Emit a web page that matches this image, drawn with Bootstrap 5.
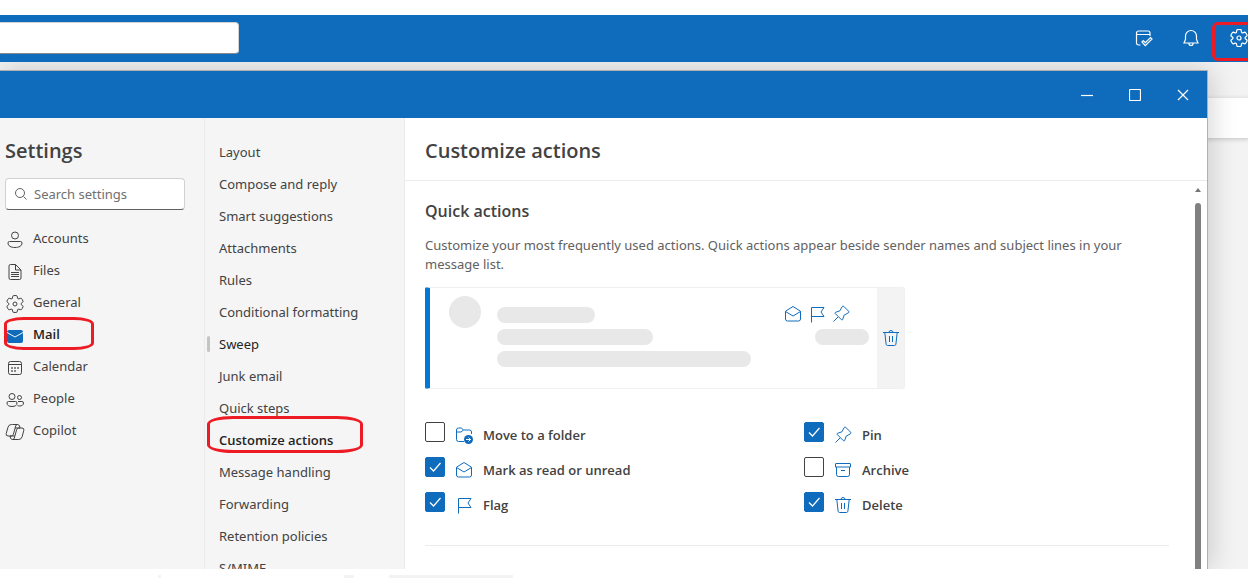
<!DOCTYPE html>
<html lang="en">
<head>
<meta charset="utf-8">
<meta name="viewport" content="width=device-width, initial-scale=1">
<title>Settings - Customize actions</title>
<link href="https://cdn.jsdelivr.net/npm/bootstrap@5.3.0/dist/css/bootstrap.min.css" rel="stylesheet">
<style>
  :root { --brand: #0f6cbd; --ink: #424242; --mark-red: #ed1c24; }
  body { font-family: "Noto Sans", "Open Sans", sans-serif; font-size: 13px; line-height: 20px; color: var(--ink); background: #fff; }
  svg { display: block; flex: none; fill: none; stroke: currentColor; }
  a { color: inherit; text-decoration: none; }
  h1, h2, p { margin: 0; }

  .app-bar { height: 47px; margin-top: 15px; padding-bottom: 2px; background: var(--brand); color: #fff; flex: none; }
  .app-search { width: 240px; height: 32px; margin-left: -1px; border: 1px solid #d1d1d1; border-bottom-color: #8a8a8a; border-left: 0; border-radius: 0 4px 4px 0; background: #fff; }
  .bar-btn { width: 48px; height: 47px; border: 0; padding: 0; background: none; color: #fff; display: flex; align-items: center; justify-content: center; position: relative; stroke-width: 1.2; }
  .app-tools { margin-right: -15px; }

  .stage { display: grid; min-height: 0; grid-template: minmax(0, 1fr) / minmax(0, 1fr); }
  .backdrop, .dialog-window { grid-area: 1 / 1; }
  .backdrop { background: #f3f3f3; }
  .backdrop-band { margin-top: 35px; height: 42px; background: #fff; border-top: 1px solid #e6e6e6; border-bottom: 1px solid #d6d6d6; box-shadow: 0 1px 4px #00000024; }
  .dialog-window { margin: 8px 40px 0 0; border: solid #b0b0b0; border-width: 1px 1px 0 0; box-shadow: 2px 0 26px #0000002e; background: #fff; min-height: 0; position: relative; }
  .title-bar { height: 47px; background: var(--brand); flex: none; }
  .nav-pane { width: 205px; flex: none; background: #f5f5f5; border-right: 1px solid #ebebeb; padding: 18px 19px 0 5px; }
  .sub-pane { width: 200px; flex: none; background: #f5f5f5; border-right: 1px solid #ebebeb; padding: 18px 2px 0; overflow: hidden; }
  .page-title, .section-title, .current, .choice label { font-family: "Open Sans", "Noto Sans", sans-serif; font-weight: 600; }
  .page-title { font-size: 20px; line-height: 30px; }
  .search-box { height: 32px; margin: 12px 0; padding: 0 9px; gap: 7px; border: 1px solid #d1d1d1; border-bottom-color: #616161; border-radius: 4px; background: #fff; color: #616161; }
  .search-box input { border: 0; outline: 0; padding: 0; min-width: 0; color: inherit; background: none; }
  .search-box input::placeholder { color: #707070; opacity: 1; }
  .nav-row { height: 32px; display: flex; align-items: center; gap: 8px; position: relative; }
  .nav-row svg { margin-top: 3px; }
  .sub-row { height: 32px; display: flex; align-items: center; padding-left: 12px; position: relative; }
  .current { color: #242424; }
  .hovered { color: #242424; }
  .hovered::before { content: ""; width: 3px; height: 16px; margin: 0 9px 0 -12px; border-radius: 2px; background: #c4c4c4; }
  .ring { position: absolute; border: 3px solid var(--mark-red); border-radius: 20px / 7px; pointer-events: none; }
  .ring-mail { inset: -1px auto auto -1px; width: 90px; height: 33px; }
  .ring-sub { inset: -8px auto auto 0; width: 156px; height: 37px; border-radius: 26px / 8px; }
  .ring-gear { inset: 8px -9px 0 -3px; border-radius: 6px; }

  .main-head { height: 63px; padding: 18px 20px 0; border-bottom: 1px solid #ebebeb; flex: none; }
  .main-body { padding: 19px 26px 0 20px; min-width: 0; }
  .section-title { font-size: 16px; line-height: 22px; }
  .intro-text { line-height: 19px; margin-top: 14px; color: #616161; }
  .preview { width: 480px; max-width: 100%; height: 102px; margin-top: 13px; border: 1px solid #f0f0f0; border-left: 5px solid #0078d4; border-radius: 2px; color: var(--brand); }
  .avatar { width: 32px; height: 32px; border-radius: 50%; background: #e8e8e8; margin: 8px 16px 0 19px; flex: none; }
  .pill { height: 16px; border-radius: 8px; background: #e8e8e8; }
  .pill-a { width: 98px; } .pill-b { width: 156px; } .pill-c { width: 254px; } .pill-d { width: 54px; }
  .pills { margin-top: 19px; display: grid; gap: 6px; align-content: start; }
  .preview-end { margin: 16px 8px 0 auto; display: grid; gap: 6px; align-content: start; justify-items: end; }
  .quick-icons { gap: 4px; height: 19px; margin-right: 18px; align-items: center; display: flex; }
  .preview-del { width: 27px; background: #f3f3f3; display: flex; align-items: center; justify-content: center; flex: none; }
  .choices { display: grid; grid-template: repeat(3, 20px) / 1fr 1fr; grid-auto-flow: column; gap: 15px 14px; margin-top: 33px; padding-bottom: 33px; border-bottom: 1px solid #ebebeb; }
  .choice { display: flex; align-items: center; }
  .choice input { appearance: none; width: 20px; height: 20px; margin: 0; border: 1px solid #424242; border-radius: 2px; background: #fff center / 20px no-repeat; flex: none; }
  .choice input:checked { border-color: var(--brand); background-color: var(--brand); background-image: url("data:image/svg+xml,%3Csvg xmlns='http://www.w3.org/2000/svg' viewBox='0 0 20 20'%3E%3Cpath d='M5 10.500l3.500 3.500 7-8' fill='none' stroke='white' stroke-width='1.200'/%3E%3C/svg%3E"); }
  .choice label { display: flex; align-items: center; gap: 9px; margin: 6px 0 0 9px; }
  .choice svg { color: var(--brand); }
  .scroll-track { width: 12px; flex: none; padding: 7px 6px 0 0; }
  .scroll-up { border: solid transparent; border-width: 0 3px 4px; border-bottom-color: #767676; width: 6px; }
  .scroll-thumb { background: #808080; width: 6px; margin-top: 11px; border-radius: 3px 3px 0 0; }
  .under-strip { height: 9px; padding-top: 6px; flex: none; }
  .under-strip i { display: block; height: 3px; background: #f3f3f3; }
</style>
</head>
<body>
<svg width="0" height="0" class="position-absolute" aria-hidden="true">
  <symbol id="gear" viewBox="0 0 20 20"><path d="M1.910 7.380A8.500 8.500 0 0 1 3.700 4.300a.5.5 0 0 1 .54-.13l1.920.68a1 1 0 0 0 1.320-.76l.36-2a.5.5 0 0 1 .4-.4 8.530 8.530 0 0 1 3.550 0c.2.04.35.2.38.4l.37 2a1 1 0 0 0 1.320.76l1.920-.68a.5.5 0 0 1 .54.13 8.500 8.500 0 0 1 1.780 3.080c.06.2 0 .4-.15.54l-1.560 1.320a1 1 0 0 0 0 1.520l1.560 1.320a.5.5 0 0 1 .15.54 8.500 8.500 0 0 1-1.780 3.080.5.5 0 0 1-.54.13l-1.920-.68a1 1 0 0 0-1.320.76l-.37 2a.5.5 0 0 1-.38.4 8.530 8.530 0 0 1-3.560 0 .5.5 0 0 1-.39-.4l-.36-2a1 1 0 0 0-1.320-.76l-1.920.68a.5.5 0 0 1-.54-.13 8.500 8.500 0 0 1-1.780-3.080.5.5 0 0 1 .15-.54l1.560-1.320a1 1 0 0 0 0-1.520L2.060 7.920a.5.5 0 0 1-.15-.54Z"/><circle cx="10" cy="10" r="2"/></symbol>
  <symbol id="mail-open" viewBox="0 0 20 20"><path d="M2.500 7.200 10 2.500l7.500 4.700V15a2 2 0 0 1-2 2h-11a2 2 0 0 1-2-2ZM2.500 7.500 10 12l7.500-4.500"/></symbol>
  <symbol id="flag" viewBox="0 0 20 20"><path d="M4.500 18.500V3.500h12.500L14 8l3 4.500H4.500"/></symbol>
  <symbol id="pin" viewBox="0 0 20 20"><path d="M11.200 2.600a1 1 0 0 1 1.600-.2l4.800 4.800a1 1 0 0 1-.2 1.600l-4.200 2.300-1.500 4.300a.8.8 0 0 1-1.300.3L4.300 9.600a.8.8 0 0 1 .3-1.300l4.300-1.500ZM7 13l-4.500 4.500"/></symbol>
  <symbol id="trash" viewBox="0 0 20 20"><path d="M2 4.500h16M8 4.500a2 2 0 0 1 4 0M3.800 4.500l1.300 11.700A1.500 1.500 0 0 0 6.600 17.500h6.800a1.500 1.500 0 0 0 1.500-1.300L16.200 4.500M8.500 8v6M11.500 8v6"/></symbol>
</svg>
<div class="d-flex flex-column vh-100 overflow-hidden">
  <header class="app-bar d-flex align-items-center">
    <input class="app-search" type="search" aria-label="Search">
    <div class="app-tools d-flex ms-auto">
      <button class="bar-btn" type="button" aria-label="My Day"><svg width="20" height="20" viewBox="0 0 20 20"><path d="M7.500 17H5.500a2 2 0 0 1-2-2V5a2 2 0 0 1 2-2h9.500a2 2 0 0 1 2 2V8M3.500 6.500H17M9 14l1.300-1.300 2 2 5.200-5.200L19 11l-6.700 6.700Z"/></svg></button>
      <button class="bar-btn" type="button" aria-label="Notifications"><svg width="20" height="20" viewBox="0 0 20 20"><path d="M10 2.500a5.500 5.500 0 0 0-5.500 5.500v3.500L3 15h14l-1.500-3.500V8A5.500 5.500 0 0 0 10 2.500ZM8 15.500a2 2 0 0 0 4 0"/></svg></button>
      <button class="bar-btn" type="button" aria-label="Settings"><svg width="20" height="20"><use href="#gear"/></svg><span class="ring ring-gear"></span></button>
    </div>
  </header>

  <div class="stage flex-fill overflow-hidden">
    <div class="backdrop"><div class="backdrop-band"></div></div>
    <section class="dialog-window d-flex flex-column">
      <div class="title-bar d-flex justify-content-end">
        <button class="bar-btn" type="button" aria-label="Minimize"><svg width="12" height="12"><path d="M0 6.500h12"/></svg></button>
        <button class="bar-btn" type="button" aria-label="Maximize"><svg width="12" height="12"><rect x=".5" y=".5" width="11" height="11" rx="1"/></svg></button>
        <button class="bar-btn" type="button" aria-label="Close"><svg width="12" height="12"><path d="M1 1l10 10M11 1 1 11"/></svg></button>
      </div>
      <div class="d-flex flex-fill" style="min-height:0">
        <nav class="nav-pane" aria-label="Settings">
          <h1 class="page-title">Settings</h1>
          <label class="search-box d-flex align-items-center"><svg width="12" height="12"><circle cx="5" cy="5" r="4.500"/><path d="m8.500 8.500 3 3"/></svg><input type="text" placeholder="Search settings" aria-label="Search settings"></label>
          <a class="nav-row" href="#"><svg width="20" height="20" viewBox="0 0 20 20"><circle cx="10" cy="5.500" r="3.500"/><path d="M4.500 11.500h11a1.500 1.500 0 0 1 1.500 1.500c0 3-3 4.500-7 4.500S3 16 3 13a1.500 1.500 0 0 1 1.500-1.500Z"/></svg>Accounts</a>
          <a class="nav-row" href="#"><svg width="20" height="20" viewBox="0 0 20 20"><path d="M5.500 2.500h5l5.500 5.500v8a1.500 1.500 0 0 1-1.500 1.500h-9A1.500 1.500 0 0 1 4 16V4a1.500 1.500 0 0 1 1.500-1.500ZM10.500 2.500V8H16M6 10.500h8M6 12.500h8M6 14.500h8"/></svg>Files</a>
          <a class="nav-row" href="#"><svg width="20" height="20"><use href="#gear"/></svg>General</a>
          <a class="nav-row current" href="#" aria-current="true"><svg width="20" height="20" viewBox="0 0 20 20"><rect x="2" y="4" width="16" height="13" rx="2" fill="#0f6cbd" stroke="none"/><path d="M2 6.500 10 11l8-4.500" stroke="#f5f5f5"/></svg>Mail<span class="ring ring-mail"></span></a>
          <a class="nav-row" href="#"><svg width="20" height="20" viewBox="0 0 20 20"><rect x="3.500" y="3.500" width="13" height="13" rx="2"/><path d="M3.500 6.500h13"/><path d="M6.200 10h1.600m1.400 0h1.600m1.400 0h1.600M6.200 13h1.600m1.400 0h1.600" stroke-width="1.600"/></svg>Calendar</a>
          <a class="nav-row" href="#"><svg width="20" height="20" viewBox="0 0 20 20"><circle cx="7" cy="6.500" r="3"/><circle cx="14.500" cy="7.500" r="2"/><path d="M3.500 11.500h7a1.500 1.500 0 0 1 1.500 1.500c0 2.500-2 3.500-5 3.500S2 15.500 2 13a1.500 1.500 0 0 1 1.500-1.500ZM13 11.500h4a1.500 1.500 0 0 1 1.500 1.500c0 2-1.500 3-4 3q-1 0-2-.4"/></svg>People</a>
          <a class="nav-row" href="#"><svg width="20" height="20" viewBox="0 0 20 20"><path d="M7.500 2.500h5q1.500 0 2 1.500l.6 2H17q2.400 0 1.800 2.500l-1.700 6.300Q16.300 17.500 13.800 17.500H7.500q-1.500 0-2-1.500L5 14H3Q.6 14 1.200 11.500L3 5.200Q3.800 2.500 6.300 2.500ZM5 14h1.200q1.700 0 2.200-1.800L10.700 4q.4-1.500 1.800-1.500M15.100 6h-1.300q-1.700 0-2.200 1.800L9.300 16q-.4 1.500-1.800 1.500M10 6h5M5 14h5"/></svg>Copilot</a>
        </nav>
        <nav class="sub-pane" aria-label="Mail settings">
          <a class="sub-row" href="#">Layout</a>
          <a class="sub-row" href="#">Compose and reply</a>
          <a class="sub-row" href="#">Smart suggestions</a>
          <a class="sub-row" href="#">Attachments</a>
          <a class="sub-row" href="#">Rules</a>
          <a class="sub-row" href="#">Conditional formatting</a>
          <a class="sub-row hovered" href="#">Sweep</a>
          <a class="sub-row" href="#">Junk email</a>
          <a class="sub-row" href="#">Quick steps</a>
          <a class="sub-row current" href="#" aria-current="page">Customize actions<span class="ring ring-sub"></span></a>
          <a class="sub-row" href="#">Message handling</a>
          <a class="sub-row" href="#">Forwarding</a>
          <a class="sub-row" href="#">Retention policies</a>
          <a class="sub-row" href="#">S/MIME</a>
        </nav>
        <main class="flex-fill d-flex flex-column overflow-hidden">
          <div class="main-head"><h2 class="page-title">Customize actions</h2></div>
          <div class="d-flex flex-fill">
            <div class="main-body flex-fill">
              <h2 class="section-title">Quick actions</h2>
              <p class="intro-text">Customize your most frequently used actions. Quick actions appear beside sender names and subject lines in your message list.</p>
              <div class="preview d-flex">
                <div class="avatar"></div>
                <div class="pills"><div class="pill pill-a"></div><div class="pill pill-b"></div><div class="pill pill-c"></div></div>
                <div class="preview-end">
                  <div class="quick-icons"><svg width="20" height="20"><use href="#mail-open"/></svg><svg width="20" height="20"><use href="#flag"/></svg><svg width="20" height="20"><use href="#pin"/></svg></div>
                  <div class="pill pill-d"></div>
                </div>
                <div class="preview-del"><svg width="20" height="20"><use href="#trash"/></svg></div>
              </div>
              <div class="choices">
                <div class="choice"><input type="checkbox" id="c1"><label for="c1"><svg width="20" height="20" viewBox="0 0 20 20"><path d="M10 16.500H4.500a2 2 0 0 1-2-2V5a2 2 0 0 1 2-2h2.700L9.500 5H15.500a2 2 0 0 1 2 2V9M2.500 7H7L9.500 5"/><circle cx="14.500" cy="14.500" r="4.500" fill="currentColor" stroke="none"/><path d="M12 14.500h4.500m-2-2 2 2-2 2" stroke="#fff"/></svg>Move to a folder</label></div>
                <div class="choice"><input type="checkbox" id="c2" checked><label for="c2"><svg width="20" height="20"><use href="#mail-open"/></svg>Mark as read or unread</label></div>
                <div class="choice"><input type="checkbox" id="c3" checked><label for="c3"><svg width="20" height="20"><use href="#flag"/></svg>Flag</label></div>
                <div class="choice"><input type="checkbox" id="c4" checked><label for="c4"><svg width="20" height="20"><use href="#pin"/></svg>Pin</label></div>
                <div class="choice"><input type="checkbox" id="c5"><label for="c5"><svg width="20" height="20" viewBox="0 0 20 20"><path d="M3 3.500h14a.5.5 0 0 1 .5.5v3h-15V4a.5.5 0 0 1 .5-.5ZM3.500 7v7.500a2 2 0 0 0 2 2h9a2 2 0 0 0 2-2V7M8 10.500h4"/></svg>Archive</label></div>
                <div class="choice"><input type="checkbox" id="c6" checked><label for="c6"><svg width="20" height="20"><use href="#trash"/></svg>Delete</label></div>
              </div>
            </div>
            <div class="scroll-track d-flex flex-column"><div class="scroll-up"></div><div class="scroll-thumb flex-fill"></div></div>
          </div>
        </main>
      </div>
    </section>
  </div>
  <div class="under-strip d-flex"><i style="width:3px;margin-left:158px"></i><i style="width:10px;margin-left:183px"></i><i style="width:124px;margin-left:35px"></i></div>
</div>
<script src="https://cdn.jsdelivr.net/npm/bootstrap@5.3.0/dist/js/bootstrap.bundle.min.js"></script>
</body>
</html>
